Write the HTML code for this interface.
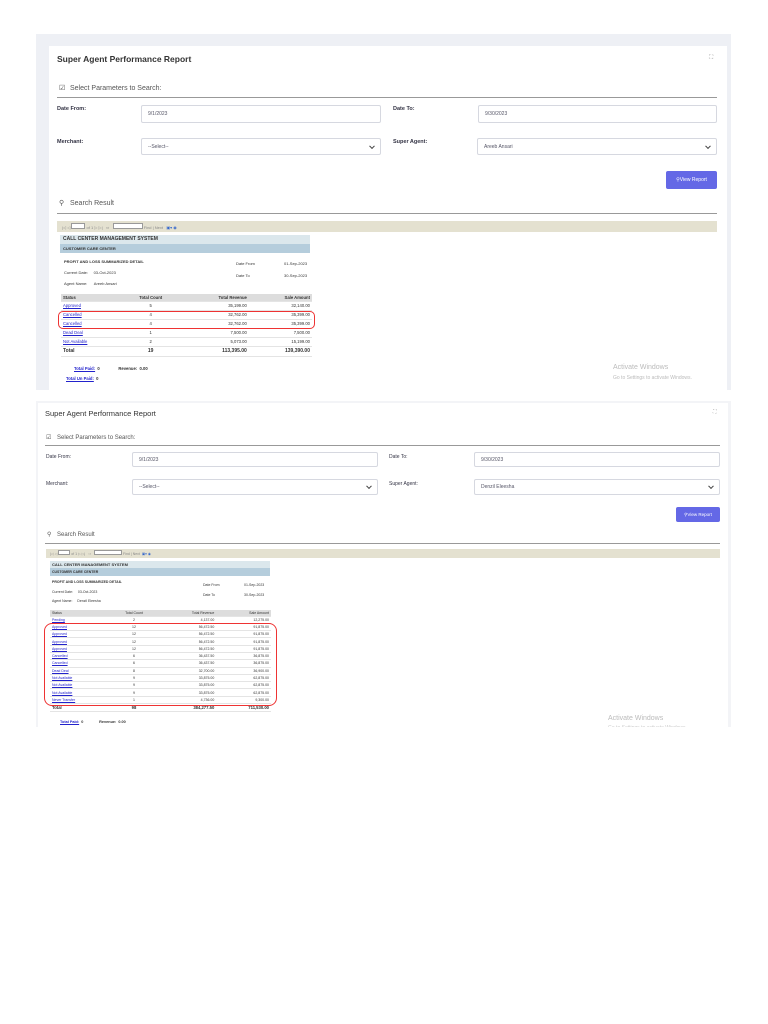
<!DOCTYPE html>
<html><head><meta charset="utf-8"><style>
*{margin:0;padding:0;box-sizing:border-box}
body{width:768px;height:1024px;background:#fff;position:relative;overflow:hidden;font-family:"Liberation Sans",sans-serif;color:#333}
.a{position:absolute;white-space:nowrap}
.inp{position:absolute;border:1px solid #d6d8e0;background:#fff;border-radius:2px;color:#556;font-size:5px;padding-left:6px;display:flex;align-items:center}
.chev{position:absolute;right:6px;top:50%;width:4px;height:4px;border-right:1px solid #444;border-bottom:1px solid #444;transform:translateY(-70%) rotate(45deg)}
.lbl{position:absolute;font-size:5.5px;color:#334;font-weight:bold}
.hr{position:absolute;height:1px;background:#999}
.btn{position:absolute;background:#6468e6;color:#fff;border-radius:2px;font-size:5px;display:flex;align-items:center;justify-content:center}
.tb{position:absolute;background:#e4e1d0}
table{border-collapse:collapse;position:absolute;font-size:4.2px}
td{border-bottom:1px solid #e4e4e4;padding:0 2px}
td.r{text-align:right}td.c{text-align:center}
a{color:#22c;text-decoration:underline}
.red{position:absolute;border:1px solid #e33;border-radius:5px}
</style></head><body>
<!-- image 1 -->
<div class="a" style="left:36px;top:34px;width:695px;height:356px;background:#eef0f5"></div>
<div class="a" style="left:49px;top:46px;width:678px;height:344px;background:#fff"></div>
<div class="a" style="left:57px;top:54px;font-size:8.5px;color:#333;font-weight:bold">Super Agent Performance Report</div>
<div class="a" style="left:709px;top:55px;font-size:6px;color:#999">⛶</div>
<div class="a" style="left:59px;top:84px;font-size:7px;color:#555">☑</div>
<div class="a" style="left:70px;top:85px;font-size:7px;color:#555">Select Parameters to Search:</div>
<div class="hr" style="left:57px;top:97px;width:660px"></div>
<div class="lbl" style="left:57px;top:106px">Date From:</div>
<div class="inp" style="left:141px;top:105px;width:240px;height:18px">9/1/2023</div>
<div class="lbl" style="left:393px;top:106px">Date To:</div>
<div class="inp" style="left:478px;top:105px;width:239px;height:18px">9/30/2023</div>
<div class="lbl" style="left:57px;top:139px">Merchant:</div>
<div class="inp" style="left:141px;top:138px;width:240px;height:17px">--Select--<span class="chev"></span></div>
<div class="lbl" style="left:393px;top:139px">Super Agent:</div>
<div class="inp" style="left:477px;top:138px;width:240px;height:17px">Areeb Ansari<span class="chev"></span></div>
<div class="btn" style="left:666px;top:171px;width:51px;height:18px">⚲View Report</div>
<div class="a" style="left:59px;top:199px;font-size:7px;color:#555">⚲</div>
<div class="a" style="left:70px;top:200px;font-size:7px;color:#555">Search Result</div>
<div class="hr" style="left:57px;top:213px;width:660px"></div>
<div class="tb" style="left:57px;top:221px;width:660px;height:11px"></div>
<div class="a" style="left:62px;top:223px;font-size:4px;color:#888">|◁ ◁ <span style="display:inline-block;width:14px;height:6px;background:#fff;border:1px solid #999"></span> of 1 ▷ ▷| &nbsp; ⇨ &nbsp;&nbsp;<span style="display:inline-block;width:30px;height:6px;background:#fff;border:1px solid #999"></span> Find | Next &nbsp;&nbsp;<span style="color:#36c">▣▾ ◉</span></div>
<div class="a" style="left:60px;top:235px;width:250px;height:9px;background:#dbe7ec;font-size:5px;font-weight:bold;padding-left:3px;line-height:9px">CALL CENTER MANAGEMENT SYSTEM</div>
<div class="a" style="left:60px;top:244px;width:250px;height:9px;background:#b5cddc;font-size:4px;font-weight:bold;padding-left:3px;line-height:9px">CUSTOMER CARE CENTER</div>
<div class="a" style="left:64px;top:259px;font-size:4px;font-weight:bold">PROFIT AND LOSS SUMMARIZED DETAIL</div>
<div class="a" style="left:64px;top:270px;font-size:4px">Current Date: &nbsp;&nbsp;&nbsp; 03-Oct-2023</div>
<div class="a" style="left:64px;top:281px;font-size:4px">Agent Name: &nbsp;&nbsp;&nbsp;&nbsp; Areeb Ansari</div>
<div class="a" style="left:236px;top:261px;font-size:4px">Date From</div><div class="a" style="left:284px;top:261px;font-size:4px">01-Sep-2023</div>
<div class="a" style="left:236px;top:273px;font-size:4px">Date To</div><div class="a" style="left:284px;top:273px;font-size:4px">30-Sep-2023</div>
<table style="left:61px;top:294px;width:251px">
<tr style="background:#ddd;height:7px;font-weight:bold"><td>Status</td><td class="c">Total Count</td><td class="r">Total Revenue</td><td class="r">Sale Amount</td></tr>
<tr style="height:9px"><td><a>Approved</a></td><td class="c">5</td><td class="r">35,199.00</td><td class="r">32,140.00</td></tr>
<tr style="height:9px"><td><a>Cancelled</a></td><td class="c">4</td><td class="r">32,762.00</td><td class="r">35,399.00</td></tr>
<tr style="height:9px"><td><a>Cancelled</a></td><td class="c">4</td><td class="r">32,762.00</td><td class="r">35,399.00</td></tr>
<tr style="height:9px"><td><a>Dead Deal</a></td><td class="c">1</td><td class="r">7,500.00</td><td class="r">7,500.00</td></tr>
<tr style="height:9px"><td><a>Not Available</a></td><td class="c">2</td><td class="r">5,073.00</td><td class="r">15,199.00</td></tr>
<tr style="height:10px;font-weight:bold;font-size:5px"><td>Total</td><td class="c">19</td><td class="r">113,395.00</td><td class="r">139,390.00</td></tr>
</table>
<div class="red" style="left:58px;top:311px;width:257px;height:18px"></div>
<div class="a" style="left:74px;top:366px;font-size:4.2px;font-weight:bold"><a>Total Paid:</a> &nbsp;0 &nbsp;&nbsp;&nbsp;&nbsp;&nbsp;&nbsp;&nbsp;&nbsp;&nbsp;&nbsp;&nbsp;&nbsp;&nbsp;&nbsp; Revenue: &nbsp;0.00</div>
<div class="a" style="left:66px;top:376px;font-size:4.2px;font-weight:bold"><a>Total Un Paid:</a> &nbsp;0</div>
<div class="a" style="left:613px;top:364px;font-size:7px;color:#bbb">Activate Windows</div>
<div class="a" style="left:613px;top:375px;font-size:5px;color:#bbb">Go to Settings to activate Windows.</div>
<!-- image 2 -->
<div class="a" style="left:36px;top:401px;width:695px;height:326px;background:#f3f4f7"></div>
<div class="a" style="left:38px;top:403px;width:690px;height:324px;background:#fff"></div>
<div class="a" style="left:45px;top:409px;font-size:7.5px;color:#333">Super Agent Performance Report</div>
<div class="a" style="left:713px;top:409px;font-size:5px;color:#999">⛶</div>
<div class="a" style="left:46px;top:434px;font-size:6px;color:#555">☑</div>
<div class="a" style="left:57px;top:435px;font-size:6px;color:#555">Select Parameters to Search:</div>
<div class="hr" style="left:45px;top:445px;width:675px"></div>
<div class="lbl" style="left:46px;top:454px;font-weight:normal;font-size:5px">Date From:</div>
<div class="inp" style="left:132px;top:452px;width:246px;height:15px">9/1/2023</div>
<div class="lbl" style="left:389px;top:454px;font-weight:normal;font-size:5px">Date To:</div>
<div class="inp" style="left:474px;top:452px;width:246px;height:15px">9/30/2023</div>
<div class="lbl" style="left:46px;top:481px;font-weight:normal;font-size:5px">Merchant:</div>
<div class="inp" style="left:132px;top:479px;width:246px;height:16px">--Select--<span class="chev"></span></div>
<div class="lbl" style="left:389px;top:481px;font-weight:normal;font-size:5px">Super Agent:</div>
<div class="inp" style="left:474px;top:479px;width:246px;height:16px">Denzil Eleesha<span class="chev"></span></div>
<div class="btn" style="left:676px;top:507px;width:44px;height:15px;font-size:4.5px">⚲View Report</div>
<div class="a" style="left:47px;top:531px;font-size:6px;color:#555">⚲</div>
<div class="a" style="left:57px;top:532px;font-size:6px;color:#555">Search Result</div>
<div class="hr" style="left:45px;top:543px;width:675px"></div>
<div class="tb" style="left:46px;top:549px;width:674px;height:9px"></div>
<div class="a" style="left:50px;top:550px;font-size:3.5px;color:#888">|◁ ◁ <span style="display:inline-block;width:12px;height:5px;background:#fff;border:1px solid #999"></span> of 1 ▷ ▷| &nbsp; ⇨ &nbsp;&nbsp;<span style="display:inline-block;width:28px;height:5px;background:#fff;border:1px solid #999"></span> Find | Next &nbsp;<span style="color:#36c">▣▾ ◉</span></div>
<div class="a" style="left:50px;top:561px;width:220px;height:7px;background:#dbe7ec;font-size:4px;font-weight:bold;padding-left:2px;line-height:7px">CALL CENTER MANAGEMENT SYSTEM</div>
<div class="a" style="left:50px;top:568px;width:220px;height:8px;background:#b5cddc;font-size:3.5px;font-weight:bold;padding-left:2px;line-height:8px">CUSTOMER CARE CENTER</div>
<div class="a" style="left:52px;top:580px;font-size:3.5px;font-weight:bold">PROFIT AND LOSS SUMMARIZED DETAIL</div>
<div class="a" style="left:52px;top:590px;font-size:3.5px">Current Date: &nbsp;&nbsp;&nbsp; 03-Oct-2023</div>
<div class="a" style="left:52px;top:599px;font-size:3.5px">Agent Name: &nbsp;&nbsp;&nbsp; Denzil Eleesha</div>
<div class="a" style="left:203px;top:583px;font-size:3.5px">Date From</div><div class="a" style="left:244px;top:583px;font-size:3.5px">01-Sep-2023</div>
<div class="a" style="left:203px;top:593px;font-size:3.5px">Date To</div><div class="a" style="left:244px;top:593px;font-size:3.5px">30-Sep-2023</div>
<table style="left:50px;top:610px;width:221px;font-size:3.5px">
<tr style="background:#ddd;height:6px"><td>Status</td><td class="c">Total Count</td><td class="r">Total Revenue</td><td class="r">Sale Amount</td></tr>
<tr style="height:7.3px"><td><a>Pending</a></td><td class="c">2</td><td class="r">4,137.00</td><td class="r">12,275.00</td></tr>
<tr style="height:7.3px"><td><a>Approved</a></td><td class="c">12</td><td class="r">56,472.50</td><td class="r">91,875.00</td></tr>
<tr style="height:7.3px"><td><a>Approved</a></td><td class="c">12</td><td class="r">56,472.50</td><td class="r">91,875.00</td></tr>
<tr style="height:7.3px"><td><a>Approved</a></td><td class="c">12</td><td class="r">56,472.50</td><td class="r">91,875.00</td></tr>
<tr style="height:7.3px"><td><a>Approved</a></td><td class="c">12</td><td class="r">56,472.50</td><td class="r">91,875.00</td></tr>
<tr style="height:7.3px"><td><a>Cancelled</a></td><td class="c">6</td><td class="r">36,437.50</td><td class="r">36,875.00</td></tr>
<tr style="height:7.3px"><td><a>Cancelled</a></td><td class="c">6</td><td class="r">36,437.50</td><td class="r">36,875.00</td></tr>
<tr style="height:7.3px"><td><a>Dead Deal</a></td><td class="c">8</td><td class="r">32,700.00</td><td class="r">36,900.00</td></tr>
<tr style="height:7.3px"><td><a>Not Available</a></td><td class="c">9</td><td class="r">33,875.00</td><td class="r">62,875.00</td></tr>
<tr style="height:7.3px"><td><a>Not Available</a></td><td class="c">9</td><td class="r">33,875.00</td><td class="r">62,875.00</td></tr>
<tr style="height:7.3px"><td><a>Not Available</a></td><td class="c">9</td><td class="r">33,875.00</td><td class="r">62,875.00</td></tr>
<tr style="height:7.3px"><td><a>Never Transfer</a></td><td class="c">1</td><td class="r">4,736.00</td><td class="r">9,300.00</td></tr>
<tr style="height:8px;font-weight:bold;font-size:4.2px"><td>Total</td><td class="c">98</td><td class="r">384,277.50</td><td class="r">711,530.00</td></tr>
</table>
<div class="red" style="left:44px;top:623px;width:233px;height:83px;border-radius:8px"></div>
<div class="a" style="left:60px;top:720px;font-size:3.8px;font-weight:bold"><a>Total Paid:</a> &nbsp;0 &nbsp;&nbsp;&nbsp;&nbsp;&nbsp;&nbsp;&nbsp;&nbsp;&nbsp;&nbsp;&nbsp;&nbsp;&nbsp; Revenue: &nbsp;0.00</div>
<div class="a" style="left:608px;top:715px;font-size:7px;color:#bbb">Activate Windows</div>
<div class="a" style="left:608px;top:725px;font-size:5px;color:#ccc;height:2px;overflow:hidden">Go to Settings to activate Windows.</div>
</body></html>
